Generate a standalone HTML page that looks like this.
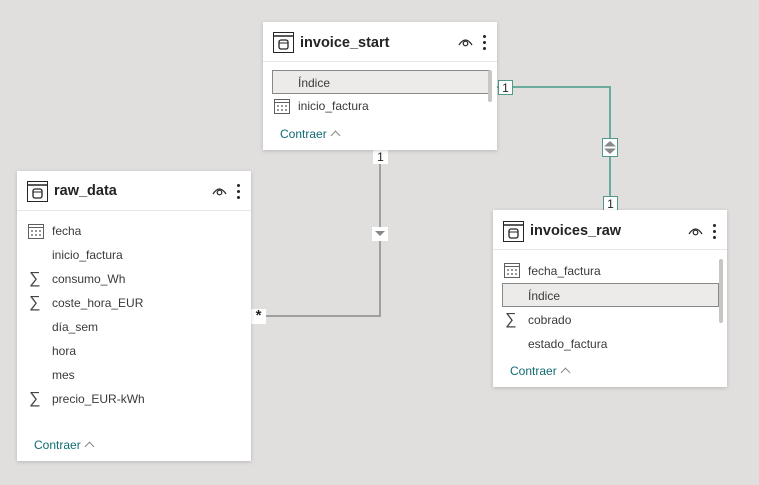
<!DOCTYPE html>
<html><head><meta charset="utf-8">
<style>
*{box-sizing:border-box;margin:0;padding:0}
body{width:759px;height:485px;background:#e1dfdd;font-family:"Segoe UI","Liberation Sans",sans-serif;position:relative;overflow:hidden}
.card{position:absolute;background:#fff;box-shadow:0 1px 4px rgba(0,0,0,.18)}
.hdr{position:absolute;left:0;right:0;top:0;border-bottom:1px solid #e6e6e6}
.title{position:absolute;left:37px;font-size:14.5px;font-weight:bold;color:#252423}
.ticon{position:absolute;left:10px}
.eye{position:absolute}
.dots{position:absolute;width:3px}
.dots i{display:block;width:3px;height:3px;background:#252423;border-radius:50%;margin-bottom:3px}
.row{position:absolute;left:35px;font-size:12px;color:#3b3a39;line-height:16px}
.sel{position:absolute;background:#edebe9;border:1px solid #8a8886}
.ic{position:absolute;left:11px}
.sig{position:absolute;left:12px;font-size:16px;color:#444;line-height:16px}
.con{position:absolute;font-size:12px;color:#0f6b73;line-height:16px}
.con span{display:inline-block;width:7px;height:7px;border-left:1px solid #888;border-top:1px solid #888;transform:rotate(45deg);margin-left:5px;position:relative;top:1px}
.sb{position:absolute;width:4px;background:#c8c6c4;border-radius:2px}
.badge{position:absolute;background:#fff;font-size:12px;text-align:center;line-height:14px;color:#252423}
</style></head><body>

<svg width="759" height="485" style="position:absolute;left:0;top:0">
<polyline points="497,87 610,87 610,210" fill="none" stroke="#6aab9c" stroke-width="2"/>
<polyline points="380,150 380,316 251,316" fill="none" stroke="#a19f9d" stroke-width="2"/>
</svg>

<div class="badge" style="left:498px;top:80px;width:15px;height:15px;border:1px solid #4f9a8a">1</div>
<div class="badge" style="left:602px;top:138px;width:16px;height:19px;border:1px solid #4f9a8a">
<svg width="14" height="17" style="position:absolute;left:0;top:0"><polygon points="7,2 13,7.5 1,7.5" fill="#888"/><polygon points="7,15 13,9.5 1,9.5" fill="#888"/></svg></div>
<div class="badge" style="left:603px;top:196px;width:15px;height:15px;border:1px solid #4f9a8a">1</div>
<div class="badge" style="left:373px;top:150px;width:15px;height:14px">1</div>
<div class="badge" style="left:372px;top:227px;width:16px;height:14px"><svg width="16" height="14" style="position:absolute;left:0;top:0"><polygon points="3,4 13,4 8,9" fill="#888"/></svg></div>
<div class="badge" style="left:251px;top:309px;width:15px;height:15px;font-weight:bold;font-size:15px">*</div>

<div class="card" style="left:263px;top:22px;width:234px;height:128px">
 <div class="hdr" style="height:40px">
  <svg class="ticon" style="top:10px" width="21" height="21" viewBox="0 0 21 21"><rect x="0.5" y="0.5" width="20" height="20" fill="none" stroke="#252423"/><line x1="0" y1="4" x2="21" y2="4" stroke="#252423" stroke-width="1.5"/><rect x="6" y="8" width="9" height="9" rx="2" fill="none" stroke="#252423" stroke-width="1.3"/><line x1="6" y1="11" x2="15" y2="11" stroke="#252423"/></svg>
  <div class="title" style="top:13px">invoice_start</div>
  <svg class="eye" style="left:195px;top:15px" width="15" height="10"><path d="M1 8 Q7.5 -2 14 8" fill="none" stroke="#252423" stroke-width="1.2"/><circle cx="7.5" cy="6.5" r="2.3" fill="none" stroke="#252423" stroke-width="1.2"/></svg>
  <div class="dots" style="left:220px;top:13px"><i></i><i></i><i></i></div>
 </div>
 <div class="sel" style="left:9px;top:48px;width:218px;height:24px"></div>
 <div class="row" style="top:53px">Índice</div>
 <div class="sb" style="left:225px;top:48px;height:32px"></div>
 <svg class="ic" style="top:77px" width="16" height="15"><rect x="0.5" y="0.5" width="15" height="14" fill="none" stroke="#605e5c"/><line x1="0" y1="3.5" x2="16" y2="3.5" stroke="#605e5c"/><g fill="#9a9896"><rect x="3" y="6" width="2" height="2"/><rect x="7" y="6" width="2" height="2"/><rect x="11" y="6" width="2" height="2"/><rect x="3" y="10" width="2" height="2"/><rect x="7" y="10" width="2" height="2"/><rect x="11" y="10" width="2" height="2"/></g></svg>
 <div class="row" style="top:76px">inicio_factura</div>
 <div class="con" style="left:17px;top:104px">Contraer<span></span></div>
</div>

<div class="card" style="left:17px;top:171px;width:234px;height:290px">
 <div class="hdr" style="height:40px">
  <svg class="ticon" style="top:10px" width="21" height="21" viewBox="0 0 21 21"><rect x="0.5" y="0.5" width="20" height="20" fill="none" stroke="#252423"/><line x1="0" y1="4" x2="21" y2="4" stroke="#252423" stroke-width="1.5"/><rect x="6" y="8" width="9" height="9" rx="2" fill="none" stroke="#252423" stroke-width="1.3"/><line x1="6" y1="11" x2="15" y2="11" stroke="#252423"/></svg>
  <div class="title" style="top:12px">raw_data</div>
  <svg class="eye" style="left:195px;top:15px" width="15" height="10"><path d="M1 8 Q7.5 -2 14 8" fill="none" stroke="#252423" stroke-width="1.2"/><circle cx="7.5" cy="6.5" r="2.3" fill="none" stroke="#252423" stroke-width="1.2"/></svg>
  <div class="dots" style="left:220px;top:13px"><i></i><i></i><i></i></div>
 </div>
 <svg class="ic" style="top:53px" width="16" height="15"><rect x="0.5" y="0.5" width="15" height="14" fill="none" stroke="#605e5c"/><line x1="0" y1="3.5" x2="16" y2="3.5" stroke="#605e5c"/><g fill="#9a9896"><rect x="3" y="6" width="2" height="2"/><rect x="7" y="6" width="2" height="2"/><rect x="11" y="6" width="2" height="2"/><rect x="3" y="10" width="2" height="2"/><rect x="7" y="10" width="2" height="2"/><rect x="11" y="10" width="2" height="2"/></g></svg>
 <div class="row" style="top:52px">fecha</div>
 <div class="row" style="top:76px">inicio_factura</div>
 <div class="sig" style="top:100px">∑</div><div class="row" style="top:100px">consumo_Wh</div>
 <div class="sig" style="top:124px">∑</div><div class="row" style="top:124px">coste_hora_EUR</div>
 <div class="row" style="top:148px">día_sem</div>
 <div class="row" style="top:172px">hora</div>
 <div class="row" style="top:196px">mes</div>
 <div class="sig" style="top:220px">∑</div><div class="row" style="top:220px">precio_EUR-kWh</div>
 <div class="con" style="left:17px;top:266px">Contraer<span></span></div>
</div>

<div class="card" style="left:493px;top:210px;width:234px;height:177px">
 <div class="hdr" style="height:40px">
  <svg class="ticon" style="top:11px" width="21" height="21" viewBox="0 0 21 21"><rect x="0.5" y="0.5" width="20" height="20" fill="none" stroke="#252423"/><line x1="0" y1="4" x2="21" y2="4" stroke="#252423" stroke-width="1.5"/><rect x="6" y="8" width="9" height="9" rx="2" fill="none" stroke="#252423" stroke-width="1.3"/><line x1="6" y1="11" x2="15" y2="11" stroke="#252423"/></svg>
  <div class="title" style="top:13px">invoices_raw</div>
  <svg class="eye" style="left:195px;top:16px" width="15" height="10"><path d="M1 8 Q7.5 -2 14 8" fill="none" stroke="#252423" stroke-width="1.2"/><circle cx="7.5" cy="6.5" r="2.3" fill="none" stroke="#252423" stroke-width="1.2"/></svg>
  <div class="dots" style="left:220px;top:14px"><i></i><i></i><i></i></div>
 </div>
 <div class="sb" style="left:226px;top:49px;height:64px"></div>
 <svg class="ic" style="top:53px" width="16" height="15"><rect x="0.5" y="0.5" width="15" height="14" fill="none" stroke="#605e5c"/><line x1="0" y1="3.5" x2="16" y2="3.5" stroke="#605e5c"/><g fill="#9a9896"><rect x="3" y="6" width="2" height="2"/><rect x="7" y="6" width="2" height="2"/><rect x="11" y="6" width="2" height="2"/><rect x="3" y="10" width="2" height="2"/><rect x="7" y="10" width="2" height="2"/><rect x="11" y="10" width="2" height="2"/></g></svg>
 <div class="row" style="top:53px">fecha_factura</div>
 <div class="sel" style="left:9px;top:73px;width:217px;height:24px"></div>
 <div class="row" style="top:78px">Índice</div>
 <div class="sig" style="top:102px">∑</div><div class="row" style="top:102px">cobrado</div>
 <div class="row" style="top:126px">estado_factura</div>
 <div class="con" style="left:17px;top:153px">Contraer<span></span></div>
</div>

</body></html>
